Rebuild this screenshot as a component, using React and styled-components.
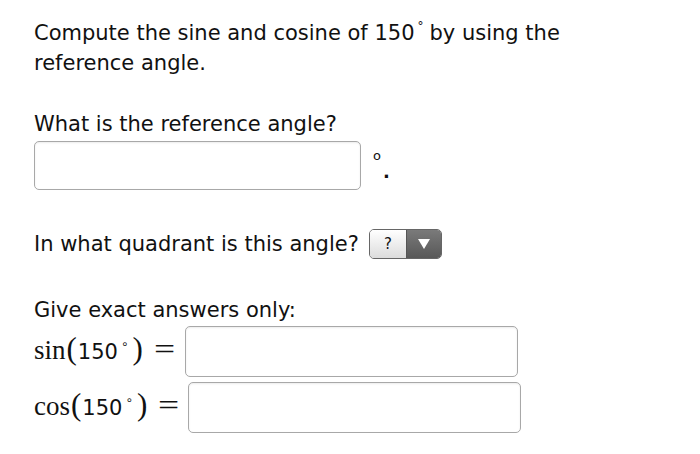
import styled, { createGlobalStyle } from 'styled-components';

const GlobalStyle = createGlobalStyle`
  body {
    margin: 0;
    background: #fff;
    font-family: "DejaVu Sans", "Open Sans", sans-serif;
    color: #111;
  }
`;

const Page = styled.div`
  width: 700px;
  height: 454px;
  padding: 18px 34px 0;
  box-sizing: border-box;
  font-size: 21px;
  line-height: 30px;
`;

const Prompt = styled.p`
  margin: ${(p) => p.$top || 0}px 0 ${(p) => p.$gap || 0}px;
`;

const Deg = styled.span`
  display: inline-block;
  font-size: 12px;
  line-height: 12px;
  vertical-align: 10px;
  margin: 0 6px 0 3px;
`;

const Row = styled.div`
  display: flex;
  align-items: ${(p) => p.$align || 'center'};
  margin: ${(p) => p.$margin || '0'};
`;

const AnswerBox = styled.input`
  box-sizing: border-box;
  width: ${(p) => p.$w}px;
  height: ${(p) => p.$h}px;
  border: 1.5px solid #a8a8a8;
  border-radius: 5px;
  background: #fff;
  box-shadow: inset 0 1px 2px rgba(0, 0, 0, 0.08);
  outline: none;
`;

const Unit = styled.div`
  position: relative;
  width: 24px;
  height: 49px;
  margin-left: 10px;
  font-size: 13px;
`;

const UnitRing = styled.span`
  position: absolute;
  left: 2px;
  top: 8px;
  line-height: 1;
`;

const UnitDot = styled.span`
  position: absolute;
  left: 12px;
  top: 22px;
  line-height: 1;
  font-size: 18px;
  font-weight: bold;
`;

const Select = styled.div`
  display: flex;
  height: 30px;
  box-sizing: border-box;
  border: 1px solid #666;
  border-radius: 5px;
  overflow: hidden;
  margin-left: 10px;
`;

const SelectValue = styled.div`
  width: 36px;
  display: flex;
  align-items: center;
  justify-content: center;
  font-size: 15px;
  background: linear-gradient(#ffffff, #dcdcdc);
`;

const SelectArrow = styled.div`
  width: 34px;
  display: flex;
  align-items: center;
  justify-content: center;
  background: linear-gradient(#7a7a7a, #585858);
  border-left: 1px solid #555;
`;

const MathLabel = styled.div`
  display: flex;
  align-items: baseline;
  font-family: "Liberation Serif", "DejaVu Serif", serif;
  font-size: 27px;
  line-height: 30px;
  width: ${(p) => p.$w}px;
  flex-shrink: 0;
`;

const Paren = styled.span`
  font-size: 31px;
  margin: 0 1px;
`;

const MathNum = styled.span`
  font-family: "DejaVu Sans", sans-serif;
  font-size: 21px;
`;

const MathDeg = styled.span`
  font-family: "DejaVu Sans", sans-serif;
  font-size: 12px;
  position: relative;
  top: -11px;
  margin: 0 3px 0 3px;
`;

const Equals = styled.span`
  display: inline-block;
  margin-left: 10px;
  font-size: 30px;
  transform: scaleX(1.25);
  transform-origin: left center;
`;

function TrigLine({ fn, width, boxW, margin }) {
  return (
    <Row $margin={margin}>
      <MathLabel $w={width}>
        {fn}
        <Paren>(</Paren>
        <MathNum>150</MathNum>
        <MathDeg>∘</MathDeg>
        <Paren>)</Paren>
        <Equals>=</Equals>
      </MathLabel>
      <AnswerBox $w={boxW} $h={51} />
    </Row>
  );
}

export default function App() {
  return (
    <>
      <GlobalStyle />
      <Page>
        <Prompt $gap={31}>
          Compute the sine and cosine of 150<Deg>°</Deg>by using the reference angle.
        </Prompt>
        <Prompt $gap={2}>What is the reference angle?</Prompt>
        <Row $align="flex-start">
          <AnswerBox $w={327} $h={49} />
          <Unit>
            <UnitRing>o</UnitRing>
            <UnitDot>.</UnitDot>
          </Unit>
        </Row>
        <Row $margin="39px 0 0">
          <span>In what quadrant is this angle?</span>
          <Select>
            <SelectValue>?</SelectValue>
            <SelectArrow>
              <svg width="12" height="10" viewBox="0 0 12 10">
                <path d="M0 0 H12 L6 10 Z" fill="#fff" />
              </svg>
            </SelectArrow>
          </Select>
        </Row>
        <Prompt $top={36}>Give exact answers only:</Prompt>
        <TrigLine fn="sin" width={151} boxW={333} margin="1px 0 0" />
        <TrigLine fn="cos" width={154} boxW={333} margin="5px 0 0" />
      </Page>
    </>
  );
}
